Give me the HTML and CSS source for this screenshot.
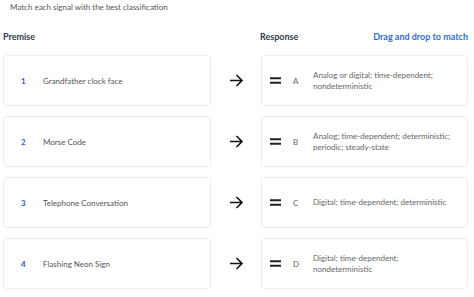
FILE: index.html
```html
<!DOCTYPE html>
<html>
<head>
    <title>Matching</title>
    <link rel="stylesheet" href="styles.css">
</head>
<body>

<p class="prompt">Match each signal with the best classification</p>

<div class="board">
    <div class="col-title">Premise</div>
    <div></div>
    <div class="col-title response-title">
        <span>Response</span>
        <span class="hint">Drag and drop to match</span>
    </div>

    <!-- row 1 -->
    <div class="card premise"><span class="num">1</span><span class="label">Grandfather clock face</span></div>
    <div class="arrow"><svg width="15" height="13" viewBox="0 0 15 13"><path d="M1 6.5H13M7.5 1L13 6.5L7.5 12" fill="none" stroke="#111" stroke-width="1.6"/></svg></div>
    <div class="card response">
        <svg class="grip" width="11" height="7" viewBox="0 0 11 7"><path d="M0 1.2H11M0 5.8H11" stroke="#222" stroke-width="2"/></svg>
        <span class="letter">A</span>
        <span class="desc">Analog or digital; time-dependent; nondeterministic</span>
    </div>

    <!-- row 2 -->
    <div class="card premise"><span class="num">2</span><span class="label">Morse Code</span></div>
    <div class="arrow"><svg width="15" height="13" viewBox="0 0 15 13"><path d="M1 6.5H13M7.5 1L13 6.5L7.5 12" fill="none" stroke="#111" stroke-width="1.6"/></svg></div>
    <div class="card response">
        <svg class="grip" width="11" height="7" viewBox="0 0 11 7"><path d="M0 1.2H11M0 5.8H11" stroke="#222" stroke-width="2"/></svg>
        <span class="letter">B</span>
        <span class="desc">Analog; time-dependent; deterministic; periodic; steady-state</span>
    </div>

    <!-- row 3 -->
    <div class="card premise"><span class="num">3</span><span class="label">Telephone Conversation</span></div>
    <div class="arrow"><svg width="15" height="13" viewBox="0 0 15 13"><path d="M1 6.5H13M7.5 1L13 6.5L7.5 12" fill="none" stroke="#111" stroke-width="1.6"/></svg></div>
    <div class="card response">
        <svg class="grip" width="11" height="7" viewBox="0 0 11 7"><path d="M0 1.2H11M0 5.8H11" stroke="#222" stroke-width="2"/></svg>
        <span class="letter">C</span>
        <span class="desc">Digital; time-dependent; deterministic</span>
    </div>

    <!-- row 4 -->
    <div class="card premise"><span class="num">4</span><span class="label">Flashing Neon Sign</span></div>
    <div class="arrow"><svg width="15" height="13" viewBox="0 0 15 13"><path d="M1 6.5H13M7.5 1L13 6.5L7.5 12" fill="none" stroke="#111" stroke-width="1.6"/></svg></div>
    <div class="card response">
        <svg class="grip" width="11" height="7" viewBox="0 0 11 7"><path d="M0 1.2H11M0 5.8H11" stroke="#222" stroke-width="2"/></svg>
        <span class="letter">D</span>
        <span class="desc">Digital; time-dependent; nondeterministic</span>
    </div>
</div>

</body>
</html>
```

FILE: styles.css
```css
body {
    margin: 0;
    padding: 0 6px 0 3px;
    font-family: Lato, "Open Sans", sans-serif;
    background: #fff;
    color: #555;
}
.prompt {
    margin: 0;
    padding: 2px 0 0 7px;
    font-size: 8px;
    line-height: 10px;
    color: #555;
}
.board {
    display: grid;
    grid-template-columns: 208px 50px 207px;
    row-gap: 10px;
    margin-top: 19px;
}
.col-title {
    font-size: 9px;
    font-weight: bold;
    color: #2e3d4f;
    line-height: 11px;
    margin-bottom: 3px;
}
.response-title {
    display: flex;
    justify-content: space-between;
    padding-left: 0;
    margin-left: -1px;
}
.hint { color: #2f6cd8; }
.card {
    height: 51px;
    box-sizing: border-box;
    border: 1px solid #ececec;
    border-radius: 4px;
    display: flex;
    align-items: center;
}
.premise { padding-left: 17px; }
.num {
    width: 22px;
    font-size: 8px;
    font-weight: bold;
    color: #2d5bbd;
}
.label { font-size: 8px; color: #555; }
.arrow {
    display: flex;
    align-items: center;
    justify-content: center;
}
.response { padding-left: 8px; }
.grip { flex: none; }
.letter {
    width: 20px;
    margin-left: 12px;
    font-size: 8px;
    color: #666;
}
.desc {
    width: 142px;
    font-size: 8px;
    line-height: 11px;
    color: #666;
}
```
